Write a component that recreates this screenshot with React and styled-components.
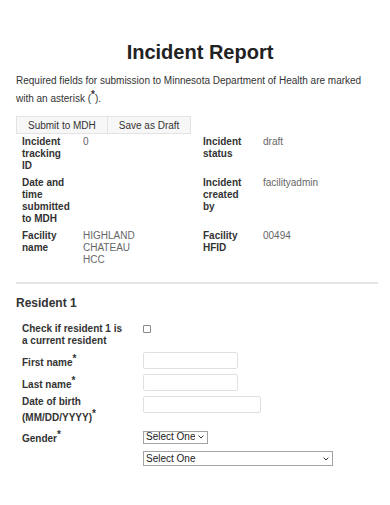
import React from 'react';
import styled, {createGlobalStyle} from 'styled-components';

const GlobalStyle = createGlobalStyle`
  body {
    margin: 0;
    background: #fff;
    font-family: "Liberation Sans", Arial, sans-serif;
    color: #333;
  }
`;

const Page = styled.div`
  padding: 40px 12px 0 16px;
`;

const Title = styled.h1`
  margin: 0;
  padding-left: 6px;
  font-size: 20px;
  line-height: 24px;
  font-weight: bold;
  color: #222;
  text-align: center;
`;

const Intro = styled.p`
  margin: 9px 0 0;
  font-size: 10px;
  line-height: 16px;
  color: #333;
`;

// required marker, raised a little above the text
const Star = styled.span`
  font-size: 10px;
  font-weight: bold;
  line-height: 12px;
  vertical-align: 4px;
`;

const ButtonRow = styled.div`
  display: flex;
  margin-top: 9px;
`;

const Button = styled.button`
  height: 18px;
  padding: 0 11px;
  margin: 0 0 0 -1px;
  border: 1px solid #e3e3e3;
  background: #f7f7f7;
  font: 10px "Liberation Sans", Arial, sans-serif;
  color: #333;
  &:first-child {
    margin-left: 0;
  }
`;

const InfoGrid = styled.dl`
  display: grid;
  grid-template-columns: 61px 120px 60px 1fr;
  row-gap: 5px;
  margin: 2px 0 0;
  padding-left: 6px;
  font-size: 10px;
  line-height: 12px;
`;

const InfoLabel = styled.dt`
  max-width: 49px;
  font-weight: bold;
  color: #333;
`;

const InfoValue = styled.dd`
  max-width: 68px;
  margin: 0;
  color: #666;
`;

const Divider = styled.hr`
  margin: 16px 0 0;
  border: 0;
  border-top: 2px solid #e6e6e6;
`;

const SectionTitle = styled.h2`
  margin: 12px 0 0;
  font-size: 12px;
  line-height: 14px;
  font-weight: bold;
  color: #333;
`;

const Form = styled.div`
  display: flex;
  flex-direction: column;
  gap: 5px;
  margin-top: 13px;
  padding-left: 6px;
`;

const Field = styled.div`
  display: grid;
  grid-template-columns: 121px 1fr;
  align-items: ${p => (p.$top ? 'start' : 'center')};
  margin-top: ${p => p.$extra || 0}px;
`;

const FieldLabel = styled.label`
  max-width: 108px;
  font-size: 10px;
  line-height: 12px;
  font-weight: bold;
  color: #333;
`;

const Control = styled.div`
  display: flex;
  align-items: flex-start;
`;

const Checkbox = styled.input.attrs({type: 'checkbox'})`
  appearance: none;
  width: 8px;
  height: 8px;
  margin: 2px 0 0;
  border: 1px solid #888;
  border-radius: 1px;
  background: #fff;
`;

const TextInput = styled.input.attrs({type: 'text'})`
  box-sizing: border-box;
  width: ${p => p.$width}px;
  height: 17px;
  margin: 0;
  padding: 0 3px;
  border: 1px solid #e0e0e0;
  border-radius: 2px;
  background: #fff;
  font: 10px "Liberation Sans", Arial, sans-serif;
`;

const SelectWrap = styled.span`
  position: relative;
  display: block;
  width: ${p => p.$width}px;
  height: ${p => p.$height}px;
`;

const Select = styled.select`
  box-sizing: border-box;
  appearance: none;
  display: block;
  width: 100%;
  height: 100%;
  margin: 0;
  padding: 0 12px 0 2px;
  border: 1px solid #a3a3a3;
  border-radius: 0;
  background: #fff;
  font: 10px "Liberation Sans", Arial, sans-serif;
  line-height: 1;
  color: #222;
`;

const Chevron = styled.svg`
  position: absolute;
  right: 4px;
  top: 50%;
  margin-top: -2px;
  pointer-events: none;
`;

const Dropdown = ({width, height}) => (
  <SelectWrap $width={width} $height={height}>
    <Select defaultValue="">
      <option value="">Select One</option>
    </Select>
    <Chevron width="6" height="4" viewBox="0 0 6 4">
      <path d="M0.6 0.6 L3 3 L5.4 0.6" fill="none" stroke="#333" strokeWidth="1" />
    </Chevron>
  </SelectWrap>
);

const info = [
  ['Incident tracking ID', '0', 'Incident status', 'draft'],
  ['Date and time submitted to MDH', '', 'Incident created by', 'facilityadmin'],
  ['Facility name', 'HIGHLAND CHATEAU HCC', 'Facility HFID', '00494']
];

export default function App() {
  return (
    <Page>
      <GlobalStyle />
      <Title>Incident Report</Title>
      <Intro>
        Required fields for submission to Minnesota Department of Health are marked with an
        asterisk (<Star>*</Star>).
      </Intro>

      <ButtonRow>
        <Button>Submit to MDH</Button>
        <Button>Save as Draft</Button>
      </ButtonRow>

      <InfoGrid>
        {info.map(([l1, v1, l2, v2]) => (
          <React.Fragment key={l1}>
            <InfoLabel>{l1}</InfoLabel>
            <InfoValue>{v1}</InfoValue>
            <InfoLabel>{l2}</InfoLabel>
            <InfoValue>{v2}</InfoValue>
          </React.Fragment>
        ))}
      </InfoGrid>

      <Divider />
      <SectionTitle>Resident 1</SectionTitle>

      <Form>
        <Field $top>
          <FieldLabel>Check if resident 1 is a current resident</FieldLabel>
          <Control><Checkbox /></Control>
        </Field>
        <Field>
          <FieldLabel>First name<Star>*</Star></FieldLabel>
          <Control><TextInput $width={95} /></Control>
        </Field>
        <Field>
          <FieldLabel>Last name<Star>*</Star></FieldLabel>
          <Control><TextInput $width={95} /></Control>
        </Field>
        <Field $top>
          <FieldLabel>Date of birth (MM/DD/YYYY)<Star>*</Star></FieldLabel>
          <Control><TextInput $width={118} /></Control>
        </Field>
        <Field>
          <FieldLabel>Gender<Star>*</Star></FieldLabel>
          <Control><Dropdown width={65} height={13} /></Control>
        </Field>
        <Field $extra={1}>
          <span />
          <Control><Dropdown width={190} height={15} /></Control>
        </Field>
      </Form>
    </Page>
  );
}
